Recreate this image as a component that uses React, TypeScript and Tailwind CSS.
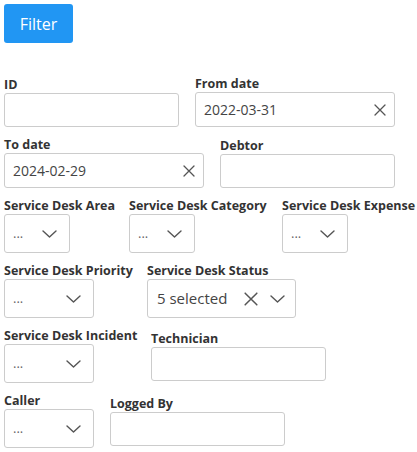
import React from "react";

const font = "font-['Open_Sans','Noto_Sans',sans-serif]";

function Chevron() {
  return (
    <svg width="15" height="8" viewBox="0 0 15 8" fill="none" className="shrink-0">
      <path d="M1 1l6.5 6L14 1" stroke="#555" strokeWidth="1.4" strokeLinecap="round" strokeLinejoin="round" />
    </svg>
  );
}

function Cross({ size = 12 }: { size?: number }) {
  return (
    <svg width={size} height={size} viewBox="0 0 12 12" fill="none" className="shrink-0">
      <path d="M1 1l10 10M11 1L1 11" stroke="#555" strokeWidth="1.3" strokeLinecap="round" />
    </svg>
  );
}

function Label({ children }: { children: React.ReactNode }) {
  return (
    <div className="mb-px whitespace-nowrap text-[12.5px] font-bold leading-[15px] text-[#333]">{children}</div>
  );
}

function TextField({ label, width = "w-[175px]" }: { label: string; width?: string }) {
  return (
    <div className={width}>
      <Label>{label}</Label>
      <div className="h-[34px] w-[175px] rounded-[3px] border border-[#ccc] bg-white" />
    </div>
  );
}

function DateField({ label, value }: { label: string; value: string }) {
  return (
    <div className="w-[200px]">
      <Label>{label}</Label>
      <div className="flex h-[35px] w-[200px] items-center justify-between rounded-[3px] border border-[#ccc] bg-white pl-[8px] pr-[8px]">
        <span className="text-[14px] text-[#444]">{value}</span>
        <Cross />
      </div>
    </div>
  );
}

function SelectField({
  label,
  itemWidth,
  boxWidth,
}: {
  label: string;
  itemWidth: string;
  boxWidth: string;
}) {
  return (
    <div className={itemWidth}>
      <Label>{label}</Label>
      <div
        className={`flex h-[39px] items-center justify-between rounded-[3px] border border-[#ccc] bg-white pl-[8px] pr-[12px] ${boxWidth}`}
      >
        <span className="text-[13px] leading-none text-[#666]">...</span>
        <Chevron />
      </div>
    </div>
  );
}

export default function App() {
  return (
    <div className={`min-h-[452px] bg-white p-1 ${font}`}>
      <button
        type="button"
        className="h-[39px] w-[69px] rounded-[3px] bg-[#2196f3] text-[16px] text-white"
      >
        Filter
      </button>

      <div className="mt-[33px] flex flex-wrap items-center gap-x-4 gap-y-[10px]">
        <TextField label="ID" />
        <DateField label="From date" value="2022-03-31" />

        <DateField label="To date" value="2024-02-29" />
        <TextField label="Debtor" />

        <SelectField label="Service Desk Area" itemWidth="w-[109px]" boxWidth="w-[66px]" />
        <SelectField label="Service Desk Category" itemWidth="w-[137px]" boxWidth="w-[66px]" />
        <SelectField label="Service Desk Expense" itemWidth="w-[130px]" boxWidth="w-[66px]" />

        <SelectField label="Service Desk Priority" itemWidth="w-[127px]" boxWidth="w-[90px]" />
        <div className="w-[149px]">
          <Label>Service Desk Status</Label>
          <div className="flex h-[39px] w-[149px] items-center rounded-[3px] border border-[#ccc] bg-white pl-[9px] pr-[10px]">
            <span className="flex-1 text-[15px] text-[#444]">5 selected</span>
            <Cross size={14} />
            <span className="ml-[12px]">
              <Chevron />
            </span>
          </div>
        </div>

        <SelectField label="Service Desk Incident" itemWidth="w-[131px]" boxWidth="w-[90px]" />
        <TextField label="Technician" />

        <SelectField label="Caller" itemWidth="w-[90px]" boxWidth="w-[90px]" />
        <TextField label="Logged By" />
      </div>
    </div>
  );
}
